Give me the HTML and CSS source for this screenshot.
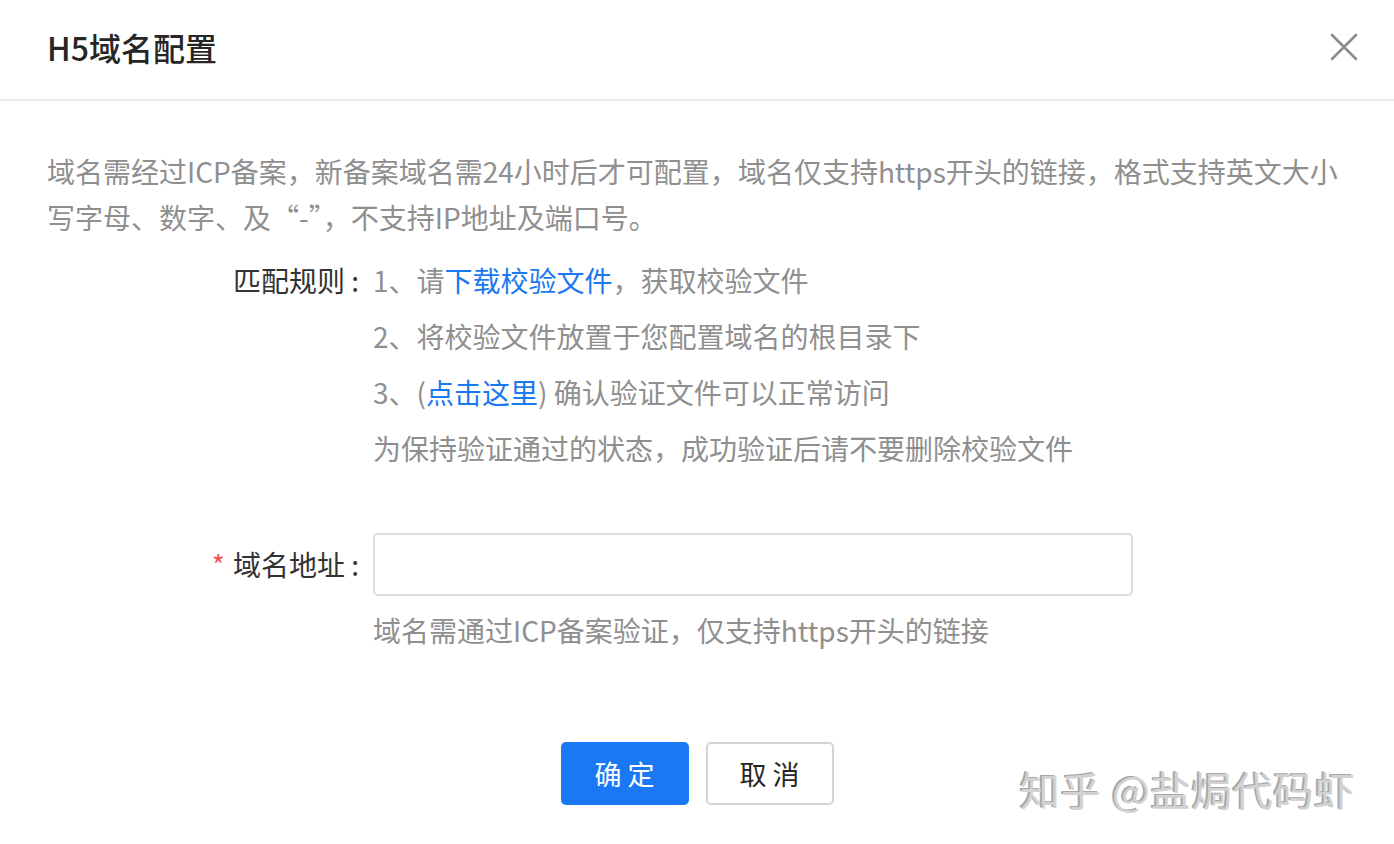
FILE: index.html
```html
<!DOCTYPE html>
<html lang="zh-CN">
<head>
    <meta charset="UTF-8">
    <title>H5域名配置</title>
    <link rel="stylesheet" href="styles.css">
</head>
<body>
    <div class="dialog">
        <header class="dialog-header">
            <h1 class="dialog-title">H5域名配置</h1>
            <button class="dialog-close" aria-label="关闭">
                <svg width="28" height="28" viewBox="0 0 28 28">
                    <path d="M2 2 L26 26 M26 2 L2 26" stroke="#8c8c8c" stroke-width="2.6" stroke-linecap="round" fill="none"/>
                </svg>
            </button>
        </header>

        <main class="dialog-body">
            <p class="desc">域名需经过ICP备案，新备案域名需24小时后才可配置，域名仅支持https开头的链接，格式支持英文大小<br>写字母、数字、及“-”，不支持IP地址及端口号。</p>

            <div class="form-row rules">
                <div class="form-label">匹配规则 :</div>
                <div class="form-content">
                    <div class="rule-line">1、请<a class="link" href="#">下载校验文件</a>，获取校验文件</div>
                    <div class="rule-line">2、将校验文件放置于您配置域名的根目录下</div>
                    <div class="rule-line">3、(<a class="link" href="#">点击这里</a>) 确认验证文件可以正常访问</div>
                    <div class="rule-line">为保持验证通过的状态，成功验证后请不要删除校验文件</div>
                </div>
            </div>

            <div class="form-row domain">
                <div class="form-label"><span class="required">*</span>域名地址 :</div>
                <div class="form-content">
                    <input class="input" type="text">
                    <div class="hint">域名需通过ICP备案验证，仅支持https开头的链接</div>
                </div>
            </div>
        </main>

        <footer class="dialog-footer">
            <button class="btn btn-primary">确 定</button>
            <button class="btn btn-default">取 消</button>
        </footer>

        <div class="watermark">知乎 @盐焗代码虾</div>
    </div>
</body>
</html>
```

FILE: styles.css
```css
body {
    margin: 0;
    padding: 0;
    background-color: #ffffff;
    font-family: "Noto Sans CJK SC", "Liberation Sans", sans-serif;
    color: #333;
}

.dialog {
    position: relative;
    width: 1394px;
    height: 844px;
    overflow: hidden;
}

.dialog-header {
    height: 101px;
    border-bottom: 2px solid #ebebeb;
    display: flex;
    align-items: center;
    justify-content: space-between;
    padding: 0 36px 6px 47px;
    box-sizing: border-box;
}

.dialog-title {
    margin: 0;
    font-size: 32px;
    font-weight: 500;
    color: #262626;
}

.dialog-close {
    background: none;
    border: none;
    padding: 0;
    display: flex;
    cursor: pointer;
}

.dialog-body {
    padding: 47px 30px 0 47px;
}

.desc {
    margin: 0;
    font-size: 28px;
    line-height: 46px;
    color: #8f8f8f;
    white-space: nowrap;
}

.form-row {
    display: flex;
}

.form-label {
    width: 326px;
    flex-shrink: 0;
    text-align: right;
    font-size: 28px;
    color: #333;
    padding-right: 14px;
    box-sizing: border-box;
    white-space: nowrap;
}

.form-content {
    flex: 1;
}

.rules {
    margin-top: 12px;
}

.rules .form-label {
    line-height: 56px;
}

.rule-line {
    font-size: 28px;
    line-height: 56px;
    color: #8f8f8f;
}

.link {
    color: #1a78f0;
    text-decoration: none;
}

.domain {
    margin-top: 57px;
}

.domain .form-label {
    line-height: 62px;
}

.required {
    color: #f0524f;
    margin-right: 8px;
}

.input {
    display: block;
    width: 760px;
    height: 63px;
    box-sizing: border-box;
    border: 2px solid #dcdcdc;
    border-radius: 5px;
    outline: none;
}

.hint {
    margin-top: 14px;
    font-size: 28px;
    line-height: 40px;
    color: #8f8f8f;
}

.dialog-footer {
    display: flex;
    justify-content: center;
    gap: 17px;
    margin-top: 92px;
}

.btn {
    width: 128px;
    height: 63px;
    border-radius: 5px;
    font-family: inherit;
    font-size: 27px;
    cursor: pointer;
    box-sizing: border-box;
}

.btn-primary {
    background-color: #1a78f5;
    border: none;
    color: #fff;
}

.btn-default {
    background-color: #fff;
    border: 2px solid #d4d4d4;
    color: #262626;
}

.watermark {
    position: absolute;
    left: 1020px;
    top: 760px;
    font-size: 40px;
    color: #d2d2d2;
    text-shadow: -2px -1px 0 #a8a8a8, 1px 1px 0 #fff;
    letter-spacing: 1px;
    white-space: nowrap;
}
```
